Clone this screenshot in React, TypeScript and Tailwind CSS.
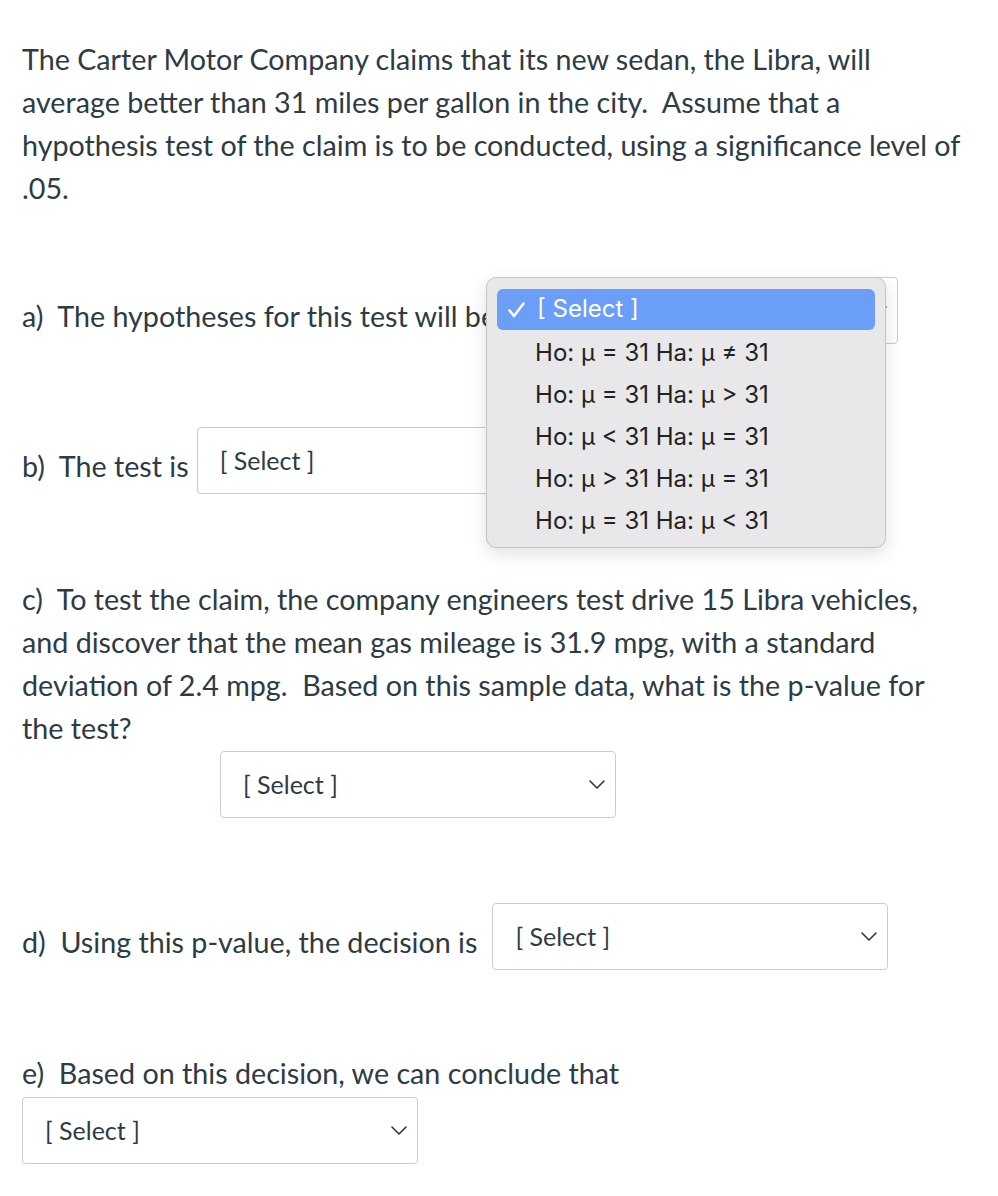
import React from 'react';

const Chevron: React.FC = () => (
  <svg width="16" height="9" viewBox="0 0 16 9" fill="none" className="shrink-0">
    <path d="M1 1l7 7 7-7" stroke="#2d3b45" strokeWidth="1.6" strokeLinecap="round" strokeLinejoin="round" />
  </svg>
);

const SelectBox: React.FC<{ className?: string }> = ({ className = '' }) => (
  <div
    className={`flex h-[67px] w-[396px] shrink-0 items-center justify-between rounded-[4px] border border-[#c7cdd1] bg-white pl-[22px] pr-[10px] text-[25px] text-[#2d3b45] ${className}`}
  >
    <span>[ Select ]</span>
    <Chevron />
  </div>
);

const options = [
  'Ho: μ = 31 Ha: μ ≠ 31',
  'Ho: μ = 31 Ha: μ > 31',
  'Ho: μ < 31 Ha: μ = 31',
  'Ho: μ > 31 Ha: μ = 31',
  'Ho: μ = 31 Ha: μ < 31',
];

// native-looking popup that is open over question a)
const OpenMenu: React.FC = () => (
  <div className="absolute left-[-16px] top-0 z-10 w-[400px] rounded-[10px] border border-[#c4c4c6] bg-[#e8e8ea] px-[10px] pb-[7px] pt-[11px] shadow-[0_6px_18px_rgba(0,0,0,0.12)] [font-family:Inter,'Liberation_Sans',sans-serif]">
    <div className="flex h-[41px] items-center rounded-[6px] bg-[#6a9ef7] pl-[11px] text-[24px] text-white">
      <svg width="17" height="16" viewBox="0 0 17 16" fill="none" className="mr-[12px]">
        <path d="M1.5 8.5l4.5 5.5L15.5 1.5" stroke="#fff" strokeWidth="2.6" strokeLinecap="round" strokeLinejoin="round" />
      </svg>
      <span className="-mt-[2px]">[ Select ]</span>
    </div>
    {options.map((o) => (
      <div key={o} className="flex h-[42px] items-center pl-[38px] pt-[3px] text-[24px] text-[#222]">
        {o}
      </div>
    ))}
  </div>
);

export default function App() {
  return (
    <div className="min-h-screen bg-white px-[22px] pt-[38px] pb-[30px] text-[28.7px] leading-[43px] text-[#2d3b45] [font-family:Lato,'Liberation_Sans',sans-serif]">
      <p className="w-[950px]">
        The Carter Motor Company claims that its new sedan, the Libra, will average better than 31 miles per gallon in the
        city.&nbsp; Assume that a hypothesis test of the claim is to be conducted, using a significance level of .05.
      </p>

      <div className="mt-[67px] flex items-center">
        <span className="mt-3">a)&nbsp; The hypotheses for this test will be</span>
        <div className="relative ml-[6px]">
          <SelectBox />
          <OpenMenu />
        </div>
      </div>

      <div className="mt-[83px] flex items-center">
        <span className="mt-3">b)&nbsp; The test is</span>
        <SelectBox className="ml-[8px]" />
      </div>

      <p className="mt-[84px] w-[944px]">
        c)&nbsp; To test the claim, the company engineers test drive 15 Libra vehicles, and discover that the mean gas
        mileage is 31.9 mpg, with a standard deviation of 2.4 mpg.&nbsp; Based on this sample data, what is the p-value
        for the test?
      </p>
      <SelectBox className="ml-[198px] mt-[1px]" />

      <div className="mt-[85px] flex items-center">
        <span className="mt-3">d)&nbsp; Using this p-value, the decision is</span>
        <SelectBox className="ml-[15px]" />
      </div>

      <p className="mt-[82px]">e)&nbsp; Based on this decision, we can conclude that</p>
      <SelectBox className="mt-[2px]" />
    </div>
  );
}
